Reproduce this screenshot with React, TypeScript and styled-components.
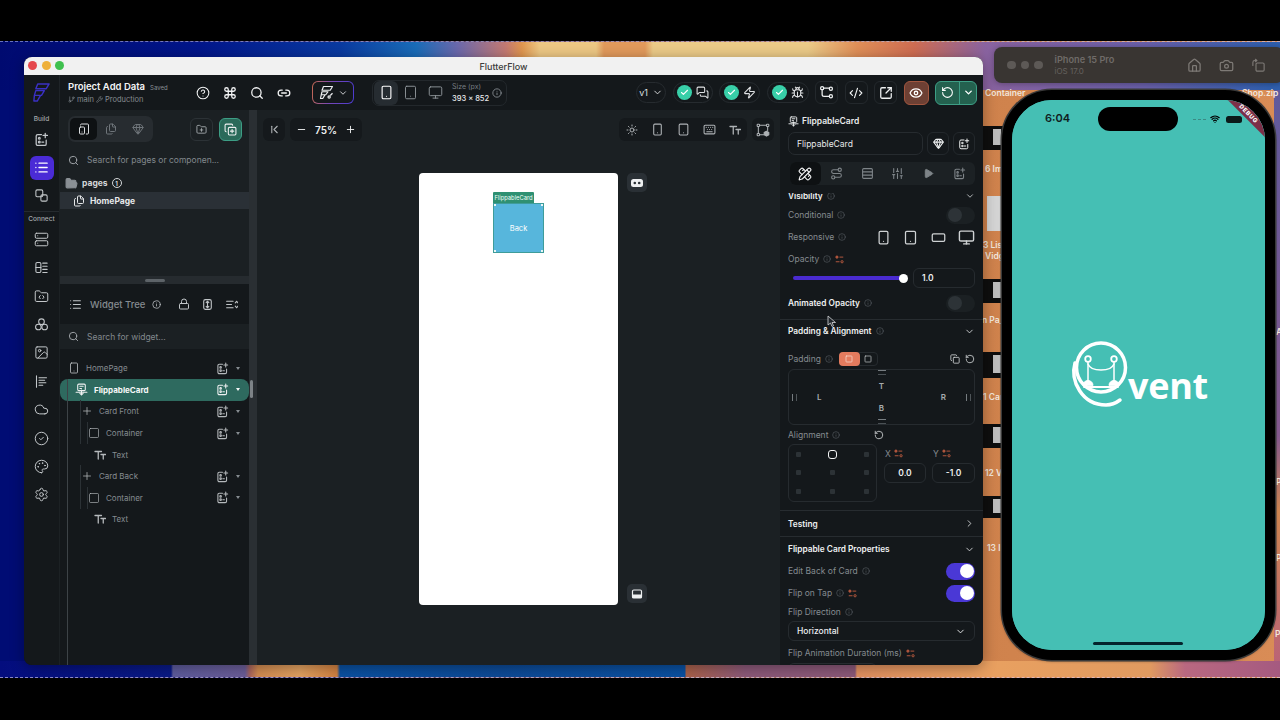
import React from 'react';
import styled, { createGlobalStyle } from 'styled-components';
import {
  CircleHelp, Command, Search, Link2, ChevronDown, ChevronRight, ChevronFirst, Smartphone, Tablet, Monitor, Info,
  MessagesSquare, Zap, Bug, CodeXml, SquareArrowOutUpRight, Eye, RotateCcw, Sun, Keyboard,
  Gem, PencilRuler, Route, Rows3, SlidersVertical, Play, Minus, Plus, Check,
  FolderOpen, FolderPlus, Files, List, Server, FolderCode, Image,
  Cloud, CircleCheck, Palette, Settings, Lock, Square, Copy,
  RectangleHorizontal, Wifi, Home, Camera, Wrench, GitBranch, CopyPlus, TabletSmartphone,
} from 'lucide-react';

const GlobalStyle = createGlobalStyle`
  html, body { margin: 0; padding: 0; background: #000; width: 1280px; height: 720px; overflow: hidden; }
  body { font-family: "Inter", "Liberation Sans", sans-serif; }
  * { box-sizing: border-box; }
  svg { display: block; flex: none; }
`;

const Screen = styled.div`
  width: 1280px;
  height: 720px;
  padding-top: 41px;
  background: #000;
`;

const Wallpaper = styled.div`
  position: relative;
  height: 637px;
  overflow: hidden;
  border-top: 1px dashed rgba(190, 200, 255, 0.55);
  border-bottom: 1px dashed rgba(230, 220, 255, 0.6);
  background:
    linear-gradient(90deg, #000a70 0, #02168a 200px, #0a3aa0 340px, #1a6cb8 416px, #6a68ac 457px, #c47a72 506px, #e0964f 522px,
      #eec884 540px, #eec884 596px, #e29a5c 604px, #e29a5c 645px, #eccb88 653px, #eccb88 808px, #e08f58 857px, #cf6d52 914px,
      #8a63a0 985px, #6a60aa 1143px, #2f5fae 1273px) top / 100% 48px no-repeat,
    linear-gradient(90deg, #040d7e 0, #0a1a85 171px, #5c5a9a 173px, #6a5c96 245px, #a8645c 250px, #d08a50 258px, #e0a060 300px,
      #d08040 337px, #0a50a0 340px, #0d4a96 500px, #0a50a0 685px, #a86048 686px, #8a5878 745px, #8a5878 855px, #e09060 857px,
      #e8a060 1000px, #e09a60 1150px, #b86880 1185px, #a55a80 1280px) bottom / 100% 16px no-repeat,
    linear-gradient(180deg, #5a5a9e 0, #85598f 62%, #cf8550 74%, #b8607a 100%) right / 6px 100% no-repeat,
    linear-gradient(90deg, #000c74 0, #000c74 24px, #cf824c 983px, #d98c56 1275px);
`;

const DeskLabel = styled.span<{ $x: number; $y: number }>`
  position: absolute;
  left: ${(p) => p.$x}px;
  top: ${(p) => p.$y - 42 - 6}px;
  font-size: 8.5px;
  font-weight: 600;
  line-height: 12px;
  color: #f2e6dc;
  white-space: nowrap;
`;

const DeskThumb = styled.div<{ $y: number; $h: number }>`
  position: absolute;
  left: 983px;
  top: ${(p) => p.$y - 42}px;
  width: 20px;
  height: ${(p) => p.$h}px;
  background: #0e0e0e;
  &::after {
    content: '';
    position: absolute;
    right: 2px;
    top: 3px;
    bottom: 5px;
    width: 8px;
    background: #bdbdbd;
  }
`;

const DeskPreview = styled.div`
  position: absolute;
  left: 987px;
  top: 154px;
  width: 14px;
  height: 35px;
  background: #d4d4d4;
`;

const Window = styled.div`
  position: absolute;
  left: 24px;
  top: 15px;
  width: 959px;
  height: 608px;
  border-radius: 8px;
  overflow: hidden;
  background: #14181b;
  display: flex;
  flex-direction: column;
  box-shadow: 0 2px 14px rgba(0, 0, 0, 0.35);
`;

const TitleBar = styled.div`
  position: relative;
  height: 18px;
  flex: none;
  background: #f1f1f1;
  display: flex;
  align-items: center;
  justify-content: center;
  font-size: 9px;
  font-weight: 500;
  color: #3c3c3c;
`;

const Lights = styled.div`
  position: absolute;
  left: 4px;
  top: 4px;
  display: flex;
  gap: 4.5px;
`;

const Light = styled.i<{ $c: string }>`
  width: 9px;
  height: 9px;
  border-radius: 50%;
  background: ${(p) => p.$c};
`;

const Header = styled.header`
  height: 35px;
  flex: none;
  display: flex;
  align-items: center;
  background: #14181b;
  padding-right: 6px;
`;

const LogoCell = styled.div`
  width: 36px;
  height: 100%;
  display: flex;
  align-items: center;
  justify-content: center;
  border-right: 1px solid #1f2428;
`;

const TitleBlock = styled.div`
  width: 128px;
  margin-left: 8px;
  display: flex;
  flex-direction: column;
  gap: 3px;
`;

const TitleLine = styled.div`
  display: flex;
  align-items: baseline;
  gap: 5px;
  font-size: 9.5px;
  font-weight: 600;
  color: #f4f5f6;
  white-space: nowrap;
`;

const Saved = styled.span`
  font-size: 6px;
  font-weight: 400;
  color: #8a9096;
`;

const SubLine = styled.div`
  display: flex;
  align-items: center;
  gap: 2px;
  font-size: 7.5px;
  color: #858b90;
  white-space: nowrap;
`;

const HeaderIcons = styled.div`
  display: flex;
  gap: 13px;
  color: #f2f3f4;
`;

const GradientBtn = styled.div`
  margin-left: 21px;
  width: 42px;
  height: 23px;
  border: 1.5px solid transparent;
  border-radius: 6px;
  background: linear-gradient(#14181b, #14181b) padding-box, linear-gradient(100deg, #c8694e 0, #7748b8 45%, #4a3ad0 100%) border-box;
  display: flex;
  align-items: center;
  justify-content: center;
  gap: 4px;
  color: #eceef0;
`;

const DeviceGroup = styled.div`
  margin-left: 18px;
  width: 135px;
  height: 26px;
  border: 1px solid #23282c;
  border-radius: 7px;
  display: flex;
  align-items: center;
  padding-left: 1px;
`;

const DeviceActive = styled.div`
  width: 24px;
  height: 24px;
  border-radius: 6px;
  background: #262c31;
  color: #fff;
  display: flex;
  align-items: center;
  justify-content: center;
`;

const DeviceIcon = styled.div<{ $w: number }>`
  width: ${(p) => p.$w}px;
  display: flex;
  justify-content: center;
  color: #8f959a;
`;

const SizeText = styled.div`
  margin-left: 4px;
  display: flex;
  flex-direction: column;
  gap: 4px;
  width: 40px;
  font-size: 7px;
  line-height: 8px;
  color: #777d82;
  white-space: nowrap;
  b { font-size: 7.5px; font-weight: 500; color: #e8eaec; }
`;

const HeaderRight = styled.div`
  margin-left: auto;
  display: flex;
  align-items: center;
  gap: 6.5px;
`;

const Pill = styled.div<{ $w: number }>`
  width: ${(p) => p.$w}px;
  height: 21px;
  border: 1px solid #262b2f;
  border-radius: 11px;
  display: flex;
  align-items: center;
  justify-content: center;
  gap: 4px;
  font-size: 9px;
  color: #dfe1e3;
`;

const CheckDot = styled.span`
  width: 15px;
  height: 15px;
  border-radius: 50%;
  background: #38cfa8;
  color: #fff;
  display: flex;
  align-items: center;
  justify-content: center;
`;

const SquareBtn = styled.div`
  width: 23px;
  height: 23px;
  border: 1px solid #23282c;
  border-radius: 6px;
  display: flex;
  align-items: center;
  justify-content: center;
  color: #eef0f1;
`;

const EyeBtn = styled.div`
  width: 25px;
  height: 24px;
  border: 1px solid #a2563f;
  border-radius: 6px;
  background: #6d4034;
  color: #fff;
  display: flex;
  align-items: center;
  justify-content: center;
`;

const RunBtn = styled.div`
  width: 42px;
  height: 24px;
  border: 1px solid #3d9e85;
  border-radius: 6px;
  background: #24614f;
  color: #fff;
  display: flex;
  align-items: center;
  span { flex: 1; height: 100%; display: flex; align-items: center; justify-content: center; }
  span + span { flex: none; width: 17px; border-left: 1px solid #3d9e85; }
`;

const Main = styled.div`
  flex: 1;
  min-height: 0;
  display: flex;
`;

const Rail = styled.nav`
  width: 36px;
  flex: none;
  background: #14181b;
  border-right: 1px solid #1c2124;
  display: flex;
  flex-direction: column;
  align-items: center;
`;

const RailLabel = styled.div<{ $h: number; $mb?: number }>`
  height: ${(p) => p.$h}px;
  margin-bottom: ${(p) => p.$mb ?? 0}px;
  display: flex;
  align-items: center;
  font-size: 6.5px;
  font-weight: 500;
  color: #a4a9ad;
`;

const RailItem = styled.div<{ $active?: boolean }>`
  width: 24px;
  height: ${(p) => (p.$active ? 24 : 28.4)}px;
  margin: ${(p) => (p.$active ? '2.2px 0' : '0')};
  border-radius: 6px;
  background: ${(p) => (p.$active ? '#4a2bd6' : 'transparent')};
  color: ${(p) => (p.$active ? '#fff' : '#c3c7ca')};
  display: flex;
  align-items: center;
  justify-content: center;
`;

const RailRule = styled.div`
  width: 100%;
  height: 1px;
  margin-top: 1px;
  background: #262b2f;
`;

const LeftPanel = styled.section`
  width: 189px;
  flex: none;
  display: flex;
  flex-direction: column;
  background: #14181b;
`;

const PagesPane = styled.div`
  height: 166px;
  flex: none;
  background: #1b2023;
  padding-top: 6px;
`;

const PagesTools = styled.div`
  display: flex;
  align-items: center;
  padding: 0 7px 0 8px;
  gap: 6px;
`;

const Segment = styled.div`
  width: 85px;
  height: 26px;
  border-radius: 7px;
  background: #272c30;
  padding: 2px;
  display: flex;
  margin-right: auto;
`;

const SegItem = styled.div<{ $active?: boolean }>`
  width: 27px;
  border-radius: 5px;
  background: ${(p) => (p.$active ? '#0e1113' : 'transparent')};
  color: ${(p) => (p.$active ? '#d8dbdd' : '#6f757a')};
  display: flex;
  align-items: center;
  justify-content: center;
`;

const GreenBtn = styled(SquareBtn)`
  background: #2a6a5a;
  border-color: #3d9e85;
`;

const DimBtn = styled(SquareBtn)`
  color: #a3a8ac;
  border-color: #2c3236;
`;

const SearchRow = styled.div<{ $h: number; $bg?: string; $mt?: number }>`
  height: ${(p) => p.$h}px;
  margin-top: ${(p) => p.$mt ?? 0}px;
  display: flex;
  align-items: center;
  gap: 8px;
  padding-left: 8px;
  background: ${(p) => p.$bg ?? 'transparent'};
  font-size: 8.5px;
  color: #82888d;
  white-space: nowrap;
  svg { color: #a8adb1; }
`;

const PagesHead = styled.div`
  height: 18px;
  display: flex;
  align-items: center;
  gap: 4px;
  padding-left: 5px;
  font-size: 8.5px;
  font-weight: 700;
  color: #d4d7d9;
`;

const CountBadge = styled.span`
  width: 10px;
  height: 10px;
  border: 1px solid #d4d7d9;
  border-radius: 50%;
  font-size: 6px;
  display: flex;
  align-items: center;
  justify-content: center;
`;

const PageRow = styled.div`
  height: 17px;
  display: flex;
  align-items: center;
  gap: 5px;
  padding-left: 13px;
  background: #2a3036;
  font-size: 8.5px;
  font-weight: 700;
  color: #e6e8ea;
`;

const Handle = styled.div`
  height: 8px;
  flex: none;
  background: #262b2f;
  display: flex;
  align-items: center;
  justify-content: center;
  &::after {
    content: '';
    width: 20px;
    height: 3px;
    border-radius: 2px;
    background: #5d6368;
  }
`;

const TreePane = styled.div`
  position: relative;
  flex: 1;
  min-height: 0;
  overflow: hidden;
  background: #14181b;
`;

const TreeHead = styled.div`
  height: 40px;
  display: flex;
  align-items: center;
  padding: 0 11px 0 9px;
  font-size: 9.5px;
  font-weight: 500;
  color: #868c91;
  svg { color: #c2c6c9; }
`;

const TreeHeadTitle = styled.span`
  margin-left: 8px;
  margin-right: 7px;
`;

const TreeTools = styled.div`
  margin-left: auto;
  display: flex;
  gap: 11px;
`;

const TreeList = styled.div`
  position: relative;
  padding-top: 8.5px;
`;

const TreeRow = styled.div<{ $pad: number; $selected?: boolean }>`
  height: 21.6px;
  display: flex;
  align-items: center;
  gap: 6px;
  padding: 0 9px 0 ${(p) => p.$pad}px;
  border-radius: 8px;
  background: ${(p) => (p.$selected ? '#2e6a5f' : 'transparent')};
  font-size: 8px;
  font-weight: ${(p) => (p.$selected ? 700 : 400)};
  color: ${(p) => (p.$selected ? '#f6f7f7' : '#868c91')};
  white-space: nowrap;
  svg { color: ${(p) => (p.$selected ? '#eef0f1' : '#b5b9bc')}; }
`;

const RowTail = styled.div`
  margin-left: auto;
  display: flex;
  align-items: center;
  gap: 7px;
`;

const Caret = styled.i`
  width: 0;
  height: 0;
  border-left: 2.5px solid transparent;
  border-right: 2.5px solid transparent;
  border-top: 3px solid currentColor;
`;

const Guide = styled.i<{ $x: number; $top: number; $h: number; $bright?: boolean }>`
  position: absolute;
  left: ${(p) => p.$x}px;
  top: ${(p) => p.$top}px;
  height: ${(p) => p.$h}px;
  width: 1px;
  background: ${(p) => (p.$bright ? '#3d4347' : '#2b3135')};
`;

const Splitter = styled.div`
  position: relative;
  width: 8px;
  flex: none;
  background: #2a2f33;
`;

const SplitThumb = styled.i`
  position: absolute;
  left: 1px;
  top: 270px;
  width: 3px;
  height: 18px;
  border-radius: 2px;
  background: #7d8387;
`;

const Canvas = styled.main`
  flex: 1;
  min-width: 0;
  background: #1b2023;
  padding: 8px 6px 0;
  display: flex;
  flex-direction: column;
`;

const CanvasBar = styled.div`
  height: 23px;
  flex: none;
  display: flex;
  align-items: stretch;
  gap: 5px;
`;

const ToolBox = styled.div<{ $w?: number }>`
  width: ${(p) => (p.$w ? `${p.$w}px` : 'auto')};
  border-radius: 6px;
  background: #15191c;
  display: flex;
  align-items: center;
  justify-content: center;
  color: #aeb2b5;
`;

const ZoomBox = styled(ToolBox)`
  justify-content: space-between;
  padding: 0 6px;
  font-size: 10px;
  font-weight: 600;
  color: #f0f1f2;
`;

const Tools = styled(ToolBox)`
  margin-left: auto;
  gap: 13px;
  width: 128px;
`;

const Stage = styled.div`
  margin: 32px 0 0 156px;
  display: flex;
`;

const PhonePage = styled.div`
  width: 199px;
  height: 432px;
  border-radius: 4px;
  background: #fff;
  padding: 19px 0 0 74px;
`;

const CardTag = styled.div`
  width: 41px;
  height: 11px;
  border-radius: 1px 1px 0 0;
  background: #2f9072;
  color: #f3fffa;
  font-size: 5.8px;
  line-height: 11px;
  text-align: center;
  white-space: nowrap;
`;

const FlipCard = styled.div`
  width: 51px;
  height: 50px;
  border: 1px solid #3e9c9a;
  background:
    linear-gradient(#e8f6f6, #e8f6f6) 0 0 / 2px 2px no-repeat,
    linear-gradient(#e8f6f6, #e8f6f6) 100% 0 / 2px 2px no-repeat,
    linear-gradient(#e8f6f6, #e8f6f6) 0 100% / 2px 2px no-repeat,
    linear-gradient(#e8f6f6, #e8f6f6) 100% 100% / 2px 2px no-repeat,
    #57b6dc;
  color: #fff;
  font-size: 7.5px;
  display: flex;
  align-items: center;
  justify-content: center;
`;

const SideCol = styled.div`
  margin-left: 9px;
  height: 432px;
  padding-bottom: 2px;
  display: flex;
  flex-direction: column;
  justify-content: space-between;
`;

const SideBtn = styled.div`
  width: 20px;
  height: 19px;
  border-radius: 5px;
  background: #2a3035;
  color: #eef0f1;
  display: flex;
  align-items: center;
  justify-content: center;
`;

const Props = styled.aside`
  position: relative;
  width: 203px;
  flex: none;
  background: #14181b;
  display: flex;
  flex-direction: column;
`;

const PropsTitle = styled.div`
  height: 22px;
  flex: none;
  display: flex;
  align-items: center;
  gap: 3px;
  padding-left: 8px;
  font-size: 8.5px;
  font-weight: 600;
  color: #e9ebec;
`;

const NameRow = styled.div`
  height: 23px;
  flex: none;
  display: flex;
  gap: 4px;
  padding: 0 8px;
`;

const NameField = styled.div`
  flex: 1;
  border: 1px solid #262b2f;
  border-radius: 7px;
  padding-left: 8px;
  display: flex;
  align-items: center;
  font-size: 8.5px;
  color: #e6e8ea;
`;

const NameBtn = styled(SquareBtn)`
  width: 22px;
  height: 23px;
`;

const PropTabs = styled.div`
  height: 23px;
  flex: none;
  margin: 7px 8px 8px 10px;
  border-radius: 6px;
  background: #1c2124;
  display: flex;
`;

const PropTab = styled.div<{ $active?: boolean }>`
  width: 31px;
  border-radius: 6px;
  background: ${(p) => (p.$active ? '#0e1113' : 'transparent')};
  color: ${(p) => (p.$active ? '#f2f3f4' : '#7e8488')};
  display: flex;
  align-items: center;
  justify-content: center;
`;

const PropScroll = styled.div`
  flex: 1;
  min-height: 0;
  overflow: hidden;
  padding: 0 8px;
  display: flex;
  flex-direction: column;
`;

const Row = styled.div<{ $h: number; $mt?: number; $strong?: boolean }>`
  height: ${(p) => p.$h}px;
  flex: none;
  margin-top: ${(p) => p.$mt ?? 0}px;
  display: flex;
  align-items: center;
  gap: 4px;
  font-size: ${(p) => (p.$strong ? 8.3 : 8.5)}px;
  font-weight: ${(p) => (p.$strong ? 600 : 400)};
  color: ${(p) => (p.$strong ? '#eef0f1' : '#858b90')};
  white-space: nowrap;
  > svg.i { color: #676d72; }
`;

const Tail = styled.div<{ $gap?: number }>`
  margin-left: auto;
  display: flex;
  align-items: center;
  gap: ${(p) => p.$gap ?? 6}px;
  color: #cfd2d4;
`;

const ResetSlot = styled.div`
  margin-left: 30px;
  color: #cfd2d4;
`;

const Rule = styled.div<{ $mt?: number }>`
  height: 1px;
  flex: none;
  margin: ${(p) => p.$mt ?? 0}px -8px 0;
  background: #272c30;
`;

const Toggle = styled.div<{ $on?: boolean }>`
  width: 29px;
  height: 17px;
  border-radius: 9px;
  background: ${(p) => (p.$on ? '#4a38d6' : '#1b2023')};
  padding: 1.5px;
  display: flex;
  justify-content: ${(p) => (p.$on ? 'flex-end' : 'flex-start')};
  &::after {
    content: '';
    width: 14px;
    height: 14px;
    border-radius: 50%;
    background: ${(p) => (p.$on ? '#fff' : '#2d3337')};
  }
`;

const Slider = styled.div`
  position: relative;
  width: 110px;
  height: 4px;
  margin-left: 5px;
  border-radius: 2px;
  background: #4a2bd0;
  &::after {
    content: '';
    position: absolute;
    right: -4.5px;
    top: -2.5px;
    width: 9px;
    height: 9px;
    border-radius: 50%;
    background: #fff;
  }
`;

const NumField = styled.div<{ $w: number; $center?: boolean }>`
  width: ${(p) => p.$w}px;
  height: 20px;
  border: 1px solid #262b2f;
  border-radius: 6px;
  display: flex;
  align-items: center;
  justify-content: ${(p) => (p.$center ? 'center' : 'flex-start')};
  padding-left: ${(p) => (p.$center ? 0 : 8)}px;
  font-size: 8.5px;
  font-weight: 600;
  color: #eef0f1;
`;

const Seg2 = styled.div`
  margin-left: 2px;
  width: 39px;
  height: 14px;
  border: 1px solid #262b2f;
  border-radius: 4px;
  display: flex;
  align-items: center;
`;

const SegOn = styled.div`
  width: 21px;
  height: 14px;
  margin-left: -1px;
  border-radius: 4px;
  background: #e37b5e;
  color: #f8e2db;
  display: flex;
  align-items: center;
  justify-content: center;
`;

const SegOff = styled.div`
  flex: 1;
  color: #c8cbcd;
  display: flex;
  justify-content: center;
`;

const PadBox = styled.div`
  height: 56px;
  flex: none;
  margin-top: -1px;
  border: 1px solid #262b2f;
  border-radius: 6px;
  display: grid;
  grid-template-columns: 1fr auto 1fr;
  align-items: center;
  font-size: 8px;
  font-weight: 600;
  color: #a6abae;
`;

const PadSide = styled.div<{ $end?: boolean }>`
  display: flex;
  align-items: center;
  justify-content: flex-start;
  flex-direction: ${(p) => (p.$end ? 'row-reverse' : 'row')};
  padding: 0 3px;
  span { margin: 0 20px; }
  &::before {
    content: '';
    width: 3px;
    height: 7px;
    border-left: 1px solid #767c80;
    border-right: 1px solid #4f5559;
  }
`;

const PadCol = styled.div`
  display: flex;
  flex-direction: column;
  align-items: center;
  gap: 12px;
  &::before, &::after {
    content: '';
    width: 8px;
    height: 3px;
    border-top: 1px solid #767c80;
    border-bottom: 1px solid #4a5054;
  }
  &::before { margin-bottom: -6px; }
  &::after { margin-top: -6px; }
`;

const AlignArea = styled.div`
  height: 58px;
  flex: none;
  margin-top: -1px;
  display: flex;
  gap: 7px;
`;

const AlignGrid = styled.div`
  width: 89px;
  border: 1px solid #262b2f;
  border-radius: 6px;
  display: grid;
  grid-template-columns: repeat(3, 34px);
  grid-template-rows: repeat(3, 1fr);
  justify-content: center;
  place-items: center;
`;

const AlignDot = styled.i<{ $on?: boolean }>`
  width: ${(p) => (p.$on ? 9 : 5)}px;
  height: ${(p) => (p.$on ? 9 : 5)}px;
  border-radius: ${(p) => (p.$on ? 3 : 1)}px;
  background: ${(p) => (p.$on ? 'transparent' : '#2c3236')};
  border: ${(p) => (p.$on ? '1.5px solid #f2f3f4' : 'none')};
`;

const XYCol = styled.div`
  width: 42px;
  display: flex;
  flex-direction: column;
  &:last-child { margin-left: -1px; }
`;

const XYLabel = styled.div`
  height: 19px;
  padding-left: 1px;
  display: flex;
  align-items: center;
  gap: 3px;
  font-size: 8.5px;
  color: #858b90;
`;

const SelectField = styled.div`
  height: 20px;
  flex: none;
  margin-top: 2px;
  border: 1px solid #262b2f;
  border-radius: 6px;
  padding: 0 8px;
  display: flex;
  align-items: center;
  justify-content: space-between;
  font-size: 8.5px;
  font-weight: 500;
  color: #eceef0;
`;

const DurationField = styled.div`
  width: 89px;
  height: 20px;
  flex: none;
  margin-top: 1px;
  border: 1px solid #262b2f;
  border-radius: 6px;
`;

const Pointer = styled.svg`
  position: absolute;
  left: 46.5px;
  top: 205px;
`;

const SimBar = styled.div`
  position: absolute;
  left: 994px;
  top: 5px;
  width: 290px;
  height: 36px;
  border-radius: 8px;
  background: #393532;
  display: flex;
  align-items: center;
  color: #7e7a76;
  box-shadow: 0 1px 6px rgba(0, 0, 0, 0.3);
`;

const SimDots = styled.div`
  margin-left: 13px;
  display: flex;
  gap: 5px;
`;

const SimDot = styled.i`
  width: 8.5px;
  height: 8.5px;
  border-radius: 50%;
  background: #5d5956;
`;

const SimText = styled.div`
  margin-left: 12px;
  width: 132px;
  display: flex;
  flex-direction: column;
  gap: 1px;
  font-size: 8px;
  color: #65615e;
  b { font-size: 9.2px; font-weight: 600; color: #6f6b68; }
`;

const SimTools = styled.div`
  display: flex;
  gap: 17px;
`;

const Phone = styled.div`
  position: absolute;
  left: 1002px;
  top: 48px;
  width: 273px;
  height: 570px;
  border-radius: 50px;
  border: 10px solid #000;
  box-shadow: 0 0 0 1.5px #3a3a3a, 0 1px 3px rgba(0, 0, 0, 0.5);
  background: #45bfb4;
`;

const PhoneScreen = styled.div`
  position: relative;
  width: 100%;
  height: 100%;
  border-radius: 40px;
  overflow: hidden;
  background: #45bfb4;
  display: flex;
  flex-direction: column;
`;

const StatusBar = styled.div`
  width: 100%;
  height: 24px;
  flex: none;
  margin-top: 7px;
  display: flex;
  align-items: center;
  padding-left: 33px;
`;

const Clock = styled.span`
  width: 53px;
  margin-bottom: 2px;
  font-size: 11px;
  font-weight: 600;
  color: #10201f;
`;

const Island = styled.div`
  width: 80px;
  height: 24px;
  border-radius: 12px;
  background: #000;
`;

const StatusIcons = styled.div`
  margin-left: 15px;
  display: flex;
  align-items: center;
  gap: 4px;
  color: #000;
`;

const Signal = styled.i`
  width: 13px;
  border-top: 1px dashed #3b8a84;
`;

const Battery = styled.i`
  width: 16px;
  height: 7px;
  margin-left: 2px;
  border-radius: 2.5px;
  background: #0b1a1a;
`;

const Ribbon = styled.div`
  position: absolute;
  right: -20px;
  top: 8px;
  width: 72px;
  height: 11px;
  transform: rotate(45deg);
  background: #7c2f48;
  color: #fff;
  font-size: 6px;
  font-weight: 800;
  letter-spacing: 0.6px;
  line-height: 11px;
  text-align: center;
`;

const Brand = styled.div`
  margin-top: 208px;
  margin-left: 56px;
  display: flex;
  align-items: flex-end;
  color: #fff;
`;

const BrandWord = styled.span`
  margin-bottom: 2px;
  font-family: "Open Sans", sans-serif;
  font-size: 36px;
  font-weight: 700;
  line-height: 38px;
  letter-spacing: -0.3px;
`;

const HomeBar = styled.i`
  position: absolute;
  left: 81px;
  bottom: 5px;
  width: 90px;
  height: 3px;
  border-radius: 2px;
  background: #04252c;
`;

const Tune = ({ s = 9 }: { s?: number }) => (
  <svg width={s} height={s} viewBox="0 0 12 12" fill="none" stroke="#b5583f" strokeWidth="1.3">
    <circle cx="2.6" cy="2.8" r="1.5" fill="#b5583f" />
    <path d="M6 2.8h5M1 9h5" />
    <circle cx="9.4" cy="9" r="1.5" />
  </svg>
);

const AddBox = ({ s = 14 }: { s?: number }) => (
  <svg width={s} height={s} viewBox="0 0 24 24" fill="none" stroke="currentColor" strokeWidth="2" strokeLinecap="round">
    <path d="M12 4H6a2.5 2.5 0 0 0-2.5 2.5V19A2.5 2.5 0 0 0 6 21.500h11a2.5 2.5 0 0 0 2.5-2.5v-6" />
    <path d="M18 2v7M14.5 5.5h7" />
    <circle cx="8.5" cy="10" r="1.4" />
    <circle cx="8.5" cy="16" r="1.4" />
    <path d="M12.5 16h3" />
  </svg>
);

const FlipGlyph = ({ s = 13 }: { s?: number }) => (
  <svg width={s} height={s} viewBox="0 0 24 24" fill="none" stroke="currentColor" strokeWidth="2" strokeLinecap="round" strokeLinejoin="round">
    <rect x="5" y="2" width="14" height="12" rx="2" />
    <path d="M9 6h6M9 10h3" />
    <path d="M2 17h8M14 17h8M12 13v9M9 19l3 3 3-3" />
  </svg>
);

const FFLogo = () => (
  <svg width="19" height="19" viewBox="0 0 20 20" fill="none" stroke="#3a30c4" strokeWidth="1.5" strokeLinejoin="round">
    <path d="M6 1h12l-3 5H4zM4 8h9l-3 5H2.5zM2.5 13l6.5 0-3.500 6L2 19z" />
  </svg>
);

const FFBolt = () => (
  <svg width="15" height="15" viewBox="0 0 20 20" fill="none" stroke="currentColor" strokeWidth="1.6" strokeLinejoin="round">
    <path d="M6 2h12l-3 5H4zM4 9h8l-3 4H3zM3 13h5l-3 5H2z" />
    <circle cx="13.5" cy="16" r="1.5" />
    <path d="M15 14l3-3" />
  </svg>
);

const RotateGlyph = () => (
  <svg width="15" height="15" viewBox="0 0 24 24" fill="none" stroke="currentColor" strokeWidth="1.8" strokeLinecap="round" strokeLinejoin="round">
    <rect x="8" y="8" width="13" height="13" rx="2" />
    <path d="M3 12V7a3 3 0 0 1 3-3h3M7 2 9.500 4 7 6" />
  </svg>
);

const Svg24 = ({ s = 15, w = 1.7, children }: { s?: number; w?: number; children: React.ReactNode }) => (
  <svg width={s} height={s} viewBox="0 0 24 24" fill="none" stroke="currentColor" strokeWidth={w} strokeLinecap="round" strokeLinejoin="round">
    {children}
  </svg>
);

const TwoBoxes = () => (
  <Svg24><rect x="3" y="3" width="11" height="11" rx="2" /><rect x="11" y="11" width="10" height="10" rx="2" /></Svg24>
);
const ThreeRings = () => (
  <Svg24><circle cx="12" cy="7.5" r="4.5" /><circle cx="7" cy="16" r="4.5" /><circle cx="17" cy="16" r="4.5" /></Svg24>
);
const BoxLines = () => (
  <Svg24><rect x="3" y="4" width="8" height="16" rx="2" /><path d="M3 12h8M14 5h7M14 10h7M14 15h7M14 20h7" /></Svg24>
);
const BarLines = () => (
  <Svg24><path d="M4 3v18M8 6h12M8 10h9M8 14h11M8 18h6" /></Svg24>
);
const BranchNodes = () => (
  <Svg24 s={15} w={2}><circle cx="5" cy="5" r="2.5" /><circle cx="19" cy="6" r="2.5" /><circle cx="19" cy="18" r="2.5" /><path d="M7.5 5h9M5 7.500V15a3 3 0 0 0 3 3h8.500" /></Svg24>
);
const BoxArrow = () => (
  <Svg24 s={13} w={2}><rect x="5" y="3" width="14" height="18" rx="3" /><path d="M12 6v12M9.500 8.500 12 6l2.500 2.500M9.500 15.500 12 18l2.500-2.500" /></Svg24>
);
const SortLines = () => (
  <Svg24 s={13} w={2}><path d="M3 6h12M3 12h9M3 18h12M19 9l2.500-3L24 9M19 15l2.500 3 2.500-3" /></Svg24>
);
const TallSmallT = ({ s = 12 }: { s?: number }) => (
  <Svg24 s={s} w={2.6}><path d="M2 5h13M8.500 5v15M14 11h9M18.500 11v9" /></Svg24>
);
const NodeFrame = () => (
  <Svg24 s={14} w={1.8}>
    <path d="M6 4h12M4 6v12M20 6v7M6 20h7" />
    <rect x="2" y="2" width="4" height="4" rx="1" />
    <rect x="18" y="2" width="4" height="4" rx="1" />
    <rect x="2" y="18" width="4" height="4" rx="1" />
    <path d="M18 14l4 2.200v4L18 22.500 14 20.200v-4z" fill="currentColor" />
  </Svg24>
);
const PillDots = () => (
  <svg width="12" height="8" viewBox="0 0 12 8">
    <rect width="12" height="8" rx="2.5" fill="#eef0f1" />
    <circle cx="3.8" cy="4" r="1.3" fill="#2a3035" />
    <circle cx="8.2" cy="4" r="1.3" fill="#2a3035" />
  </svg>
);
const BoxBar = () => (
  <Svg24 s={12} w={2.4}><rect x="3" y="4" width="18" height="16" rx="2.500" /><rect x="4" y="14" width="16" height="5" fill="currentColor" /></Svg24>
);

const EventMark = () => (
  <svg width="60" height="68" viewBox="0 0 60 68" fill="none" stroke="#fff" strokeLinecap="round" strokeLinejoin="round">
    <circle cx="33" cy="28.500" r="24.500" strokeWidth="3.500" />
    <path d="M7 24C2 42 14 66 38 66c5 0 10-2 14-5" strokeWidth="3.500" />
    <circle cx="20" cy="20" r="2.800" strokeWidth="1.800" />
    <circle cx="46" cy="20" r="2.800" strokeWidth="1.800" />
    <path d="M20 23v19M46 23v19" strokeWidth="1.500" />
    <path d="M20 25c3 8 23 8 26 0" strokeWidth="1.500" />
    <path d="M15 46a5 4.500 0 0 1 10 0zM41 46a5 4.500 0 0 1 10 0z" fill="#fff" strokeWidth="1" />
    <path d="M16 48h34" strokeWidth="1.800" />
  </svg>
);

type TreeItem = { name: string; pad: number; icon: React.ReactNode; selected?: boolean; tail?: boolean };
const treeItems: TreeItem[] = [
  { name: 'HomePage', pad: 8, icon: <Smartphone size={12} strokeWidth={1.7} />, tail: true },
  { name: 'FlippableCard', pad: 15, icon: <FlipGlyph />, selected: true, tail: true },
  { name: 'Card Front', pad: 21, icon: <Plus size={12} strokeWidth={1.5} />, tail: true },
  { name: 'Container', pad: 28, icon: <Square size={12} strokeWidth={1.3} />, tail: true },
  { name: 'Text', pad: 34, icon: <TallSmallT /> },
  { name: 'Card Back', pad: 21, icon: <Plus size={12} strokeWidth={1.5} />, tail: true },
  { name: 'Container', pad: 28, icon: <Square size={12} strokeWidth={1.3} />, tail: true },
  { name: 'Text', pad: 34, icon: <TallSmallT /> },
];

const connectIcons: React.ReactNode[] = [
  <Server size={15} strokeWidth={1.6} />,
  <BoxLines />,
  <FolderCode size={15} strokeWidth={1.6} />,
  <ThreeRings />,
  <Image size={15} strokeWidth={1.6} />,
  <BarLines />,
  <Cloud size={15} strokeWidth={1.6} />,
  <CircleCheck size={15} strokeWidth={1.6} />,
  <Palette size={15} strokeWidth={1.6} />,
  <Settings size={15} strokeWidth={1.6} />,
];

const deskLabels: [string, number, number][] = [
  ['Container', 985, 93], ['6 Im', 985, 169], ['3 Lis', 983, 245], ['Vidg', 985, 256], ['n Pa_', 982, 320],
  ['1 Car', 983, 397], ['12 V', 985, 473], ['13 I', 987, 548], ['Shop.zip', 1242, 93], ['A', 1276, 332],
  ['P', 1276, 482], ['P', 1276, 558], ['PD', 1275, 634],
];

const deskThumbs: [number, number][] = [[126, 24], [279, 24], [352, 26], [424, 24], [496, 22]];

const Ico = { className: 'i', size: 8, strokeWidth: 1.5 };

export default function App() {
  return (
    <Screen>
      <GlobalStyle />
      <Wallpaper>
        {deskLabels.map(([t, x, y]) => (
          <DeskLabel key={`${t}${y}`} $x={x} $y={y}>{t}</DeskLabel>
        ))}
        {deskThumbs.map(([y, h]) => (
          <DeskThumb key={y} $y={y} $h={h} />
        ))}
        <DeskPreview />

        <Window>
          <TitleBar>
            <Lights>
              <Light $c="#e5484d" />
              <Light $c="#eeb03a" />
              <Light $c="#3fc04e" />
            </Lights>
            FlutterFlow
          </TitleBar>
          <Header>
            <LogoCell><FFLogo /></LogoCell>
            <TitleBlock>
              <TitleLine>Project Add Data <Saved>Saved</Saved></TitleLine>
              <SubLine><GitBranch size={7} /> main <Wrench size={7} /> Production</SubLine>
            </TitleBlock>
            <HeaderIcons>
              <CircleHelp size={14} strokeWidth={1.8} />
              <Command size={14} strokeWidth={2.2} />
              <Search size={14} strokeWidth={2.2} />
              <Link2 size={14} strokeWidth={2.2} />
            </HeaderIcons>
            <GradientBtn><FFBolt /><ChevronDown size={10} /></GradientBtn>
            <DeviceGroup>
              <DeviceActive><Smartphone size={15} strokeWidth={1.8} /></DeviceActive>
              <DeviceIcon $w={25}><Tablet size={15} strokeWidth={1.5} /></DeviceIcon>
              <DeviceIcon $w={25}><Monitor size={15} strokeWidth={1.5} /></DeviceIcon>
              <SizeText>Size (px)<b>393 × 852</b></SizeText>
              <DeviceIcon $w={10}><Info size={10} /></DeviceIcon>
            </DeviceGroup>
            <HeaderRight>
              <Pill $w={30}>v1 <ChevronDown size={11} /></Pill>
              <Pill $w={40}><CheckDot><Check size={9} strokeWidth={3} /></CheckDot><MessagesSquare size={13} /></Pill>
              <Pill $w={41}><CheckDot><Check size={9} strokeWidth={3} /></CheckDot><Zap size={13} /></Pill>
              <Pill $w={42}><CheckDot><Check size={9} strokeWidth={3} /></CheckDot><Bug size={13} /></Pill>
              <SquareBtn><BranchNodes /></SquareBtn>
              <SquareBtn><CodeXml size={14} /></SquareBtn>
              <SquareBtn><SquareArrowOutUpRight size={14} strokeWidth={2.2} /></SquareBtn>
              <EyeBtn><Eye size={14} strokeWidth={2.2} /></EyeBtn>
              <RunBtn>
                <span><RotateCcw size={13} /></span>
                <span><ChevronDown size={11} strokeWidth={3} /></span>
              </RunBtn>
            </HeaderRight>
          </Header>

          <Main>
            <Rail>
              <RailLabel $h={18} $mb={-3}>Build</RailLabel>
              <RailItem><AddBox s={15} /></RailItem>
              <RailItem $active><List size={15} strokeWidth={2.2} /></RailItem>
              <RailItem><TwoBoxes /></RailItem>
              <RailRule />
              <RailLabel $h={13}>Connect</RailLabel>
              {connectIcons.map((icon, i) => (
                <RailItem key={i}>{icon}</RailItem>
              ))}
            </Rail>

            <LeftPanel>
              <PagesPane>
                <PagesTools>
                  <Segment>
                    <SegItem $active><TabletSmartphone size={12} /></SegItem>
                    <SegItem><Files size={12} /></SegItem>
                    <SegItem><Gem size={12} /></SegItem>
                  </Segment>
                  <DimBtn><FolderPlus size={11} /></DimBtn>
                  <GreenBtn><CopyPlus size={13} /></GreenBtn>
                </PagesTools>
                <SearchRow $h={28} $mt={4}><Search size={11} />Search for pages or componen...</SearchRow>
                <PagesHead><FolderOpen size={13} fill="#8a9095" stroke="#8a9095" />pages<CountBadge>1</CountBadge></PagesHead>
                <PageRow><Files size={12} />HomePage</PageRow>
              </PagesPane>
              <Handle />
              <TreePane>
                <TreeHead>
                  <List size={13} />
                  <TreeHeadTitle>Widget Tree</TreeHeadTitle>
                  <Info size={9} />
                  <TreeTools>
                    <Lock size={12} />
                    <BoxArrow />
                    <SortLines />
                  </TreeTools>
                </TreeHead>
                <SearchRow $h={25} $bg="#1b2023"><Search size={11} />Search for widget...</SearchRow>
                <TreeList>
                  <Guide $x={7} $top={30} $h={300} $bright />
                  <Guide $x={20} $top={51} $h={44} />
                  <Guide $x={27} $top={73} $h={22} />
                  <Guide $x={20} $top={116} $h={44} />
                  <Guide $x={27} $top={138} $h={22} />
                  {treeItems.map((t, i) => (
                    <TreeRow key={i} $pad={t.pad} $selected={t.selected}>
                      {t.icon}
                      {t.name}
                      {t.tail && <RowTail><AddBox s={13} /><Caret /></RowTail>}
                    </TreeRow>
                  ))}
                </TreeList>
              </TreePane>
            </LeftPanel>

            <Splitter><SplitThumb /></Splitter>

            <Canvas>
              <CanvasBar>
                <ToolBox $w={22}><ChevronFirst size={13} /></ToolBox>
                <ZoomBox $w={72}>
                  <Minus size={11} />75%<Plus size={11} />
                </ZoomBox>
                <Tools>
                  <Sun size={12} />
                  <Smartphone size={13} />
                  <Tablet size={13} />
                  <Keyboard size={13} />
                  <TallSmallT />
                </Tools>
                <ToolBox $w={22}><NodeFrame /></ToolBox>
              </CanvasBar>
              <Stage>
                <PhonePage>
                  <CardTag>FlippableCard</CardTag>
                  <FlipCard>Back</FlipCard>
                </PhonePage>
                <SideCol>
                  <SideBtn><PillDots /></SideBtn>
                  <SideBtn><BoxBar /></SideBtn>
                </SideCol>
              </Stage>
            </Canvas>

            <Props>
              <PropsTitle><FlipGlyph s={11} />FlippableCard</PropsTitle>
              <NameRow>
                <NameField>FlippableCard</NameField>
                <NameBtn><Gem size={11} strokeWidth={2.4} /></NameBtn>
                <NameBtn><AddBox s={12} /></NameBtn>
              </NameRow>
              <PropTabs>
                <PropTab $active><PencilRuler size={14} strokeWidth={1.9} /></PropTab>
                <PropTab><Route size={13} /></PropTab>
                <PropTab><Rows3 size={13} /></PropTab>
                <PropTab><SlidersVertical size={13} /></PropTab>
                <PropTab><Play size={11} fill="currentColor" /></PropTab>
                <PropTab><AddBox s={13} /></PropTab>
              </PropTabs>
              <PropScroll>
                <Row $h={16} $mt={-5} $strong>Visibility <Info {...Ico} /><Tail><ChevronDown size={10} /></Tail></Row>
                <Row $h={22}>Conditional <Info {...Ico} /><Tail><Toggle /></Tail></Row>
                <Row $h={22}>
                  Responsive <Info {...Ico} />
                  <Tail $gap={12.5}>
                    <Smartphone size={15} />
                    <Tablet size={15} />
                    <RectangleHorizontal size={15} />
                    <Monitor size={17} />
                  </Tail>
                </Row>
                <Row $h={22}>Opacity <Info {...Ico} /><Tune /></Row>
                <Row $h={20} $mt={-2}><Slider /><Tail><NumField $w={62}>1.0</NumField></Tail></Row>
                <Row $h={22} $mt={4} $strong>Animated Opacity <Info {...Ico} /><Tail><Toggle /></Tail></Row>
                <Rule $mt={5} />
                <Row $h={22} $strong>Padding &amp; Alignment <Info {...Ico} /><Tail><ChevronDown size={11} /></Tail></Row>
                <Row $h={22} $mt={6}>
                  Padding <Info {...Ico} />
                  <Seg2>
                    <SegOn><Square size={8} /></SegOn>
                    <SegOff><Square size={8} /></SegOff>
                  </Seg2>
                  <Tail $gap={5}><Copy size={10} /><RotateCcw size={10} /></Tail>
                </Row>
                <PadBox>
                  <PadSide><span>L</span></PadSide>
                  <PadCol><span>T</span><span>B</span></PadCol>
                  <PadSide $end><span>R</span></PadSide>
                </PadBox>
                <Row $h={20}>
                  Alignment <Info {...Ico} />
                  <ResetSlot><RotateCcw size={10} /></ResetSlot>
                </Row>
                <AlignArea>
                  <AlignGrid>
                    <AlignDot />
                    <AlignDot $on />
                    <AlignDot />
                    <AlignDot />
                    <AlignDot />
                    <AlignDot />
                    <AlignDot />
                    <AlignDot />
                    <AlignDot />
                  </AlignGrid>
                  <XYCol>
                    <XYLabel>X <Tune /></XYLabel>
                    <NumField $w={42} $center>0.0</NumField>
                  </XYCol>
                  <XYCol>
                    <XYLabel>Y <Tune /></XYLabel>
                    <NumField $w={43} $center>-1.0</NumField>
                  </XYCol>
                </AlignArea>
                <Rule $mt={8} />
                <Row $h={25} $strong>Testing<Tail><ChevronRight size={11} /></Tail></Row>
                <Rule />
                <Row $h={24} $strong>Flippable Card Properties<Tail><ChevronDown size={11} /></Tail></Row>
                <Row $h={20}>Edit Back of Card <Info {...Ico} /><Tail><Toggle $on /></Tail></Row>
                <Row $h={24}>Flip on Tap <Info {...Ico} /><Tune /><Tail><Toggle $on /></Tail></Row>
                <Row $h={14}>Flip Direction <Info {...Ico} /></Row>
                <SelectField>Horizontal<ChevronDown size={11} /></SelectField>
                <Row $h={18} $mt={3}>Flip Animation Duration (ms) <Tune /></Row>
                <DurationField />
              </PropScroll>
              <Pointer width="10" height="13" viewBox="0 0 10 13">
                <path d="M1 1v9l2.5-2 1.5 3.500 1.500-.7L5 7.500h3.500z" fill="#20252a" stroke="#d6d8da" strokeWidth=".8" />
              </Pointer>
            </Props>
          </Main>
        </Window>

        <SimBar>
          <SimDots><SimDot /><SimDot /><SimDot /></SimDots>
          <SimText><b>iPhone 15 Pro</b>iOS 17.0</SimText>
          <SimTools>
            <Home size={15} />
            <Camera size={15} />
            <RotateGlyph />
          </SimTools>
        </SimBar>

        <Phone>
          <PhoneScreen>
            <StatusBar>
              <Clock>6:04</Clock>
              <Island />
              <StatusIcons>
                <Signal />
                <Wifi size={10} strokeWidth={3} />
                <Battery />
              </StatusIcons>
            </StatusBar>
            <Ribbon>DEBUG</Ribbon>
            <Brand>
              <EventMark />
              <BrandWord>vent</BrandWord>
            </Brand>
            <HomeBar />
          </PhoneScreen>
        </Phone>
      </Wallpaper>
    </Screen>
  );
}
